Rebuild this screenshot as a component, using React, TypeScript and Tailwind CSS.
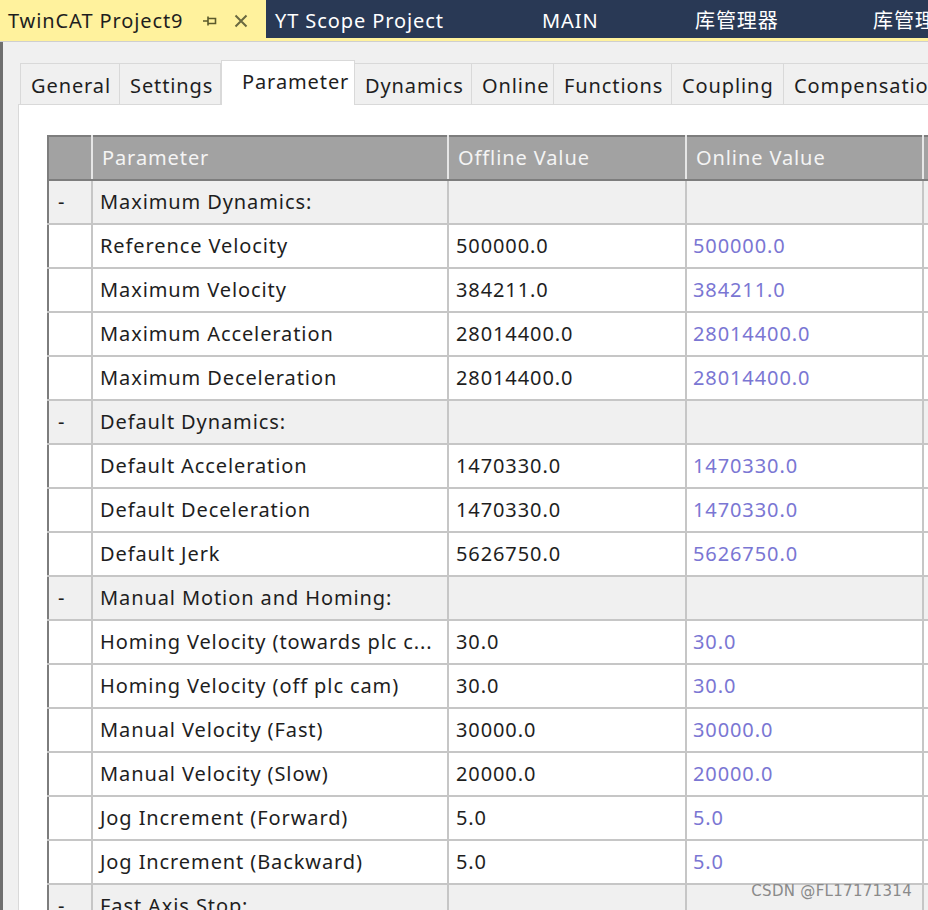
import React from "react";

type Row = {
  group?: boolean;
  name: string;
  offline?: string;
  online?: string;
};

const ROWS: Row[] = [
  { group: true, name: "Maximum Dynamics:" },
  { name: "Reference Velocity", offline: "500000.0", online: "500000.0" },
  { name: "Maximum Velocity", offline: "384211.0", online: "384211.0" },
  { name: "Maximum Acceleration", offline: "28014400.0", online: "28014400.0" },
  { name: "Maximum Deceleration", offline: "28014400.0", online: "28014400.0" },
  { group: true, name: "Default Dynamics:" },
  { name: "Default Acceleration", offline: "1470330.0", online: "1470330.0" },
  { name: "Default Deceleration", offline: "1470330.0", online: "1470330.0" },
  { name: "Default Jerk", offline: "5626750.0", online: "5626750.0" },
  { group: true, name: "Manual Motion and Homing:" },
  { name: "Homing Velocity (towards plc c...", offline: "30.0", online: "30.0" },
  { name: "Homing Velocity (off plc cam)", offline: "30.0", online: "30.0" },
  { name: "Manual Velocity (Fast)", offline: "30000.0", online: "30000.0" },
  { name: "Manual Velocity (Slow)", offline: "20000.0", online: "20000.0" },
  { name: "Jog Increment (Forward)", offline: "5.0", online: "5.0" },
  { name: "Jog Increment (Backward)", offline: "5.0", online: "5.0" },
  { group: true, name: "Fast Axis Stop:" },
];

const TABS = [
  { label: "General", w: "w-[100px]" },
  { label: "Settings", w: "w-[101px]" },
  { label: "Parameter", w: "w-[134px]", active: true },
  { label: "Dynamics", w: "w-[117px]" },
  { label: "Online", w: "w-[82px]" },
  { label: "Functions", w: "w-[118px]" },
  { label: "Coupling", w: "w-[112px]" },
  { label: "Compensation", w: "w-[170px]" },
];

const FONT = {
  fontFamily: '"Noto Sans", "Noto Sans CJK SC", sans-serif',
};

function PinIcon() {
  return (
    <svg width="14" height="12" viewBox="0 0 14 12" className="shrink-0">
      <path d="M0 6 H5 M5 1.5 V10.5 M5 3.5 H12.5 V8.5 H5" fill="none" stroke="#5b5a2c" strokeWidth="1.6" />
    </svg>
  );
}

function CloseIcon() {
  return (
    <svg width="14" height="14" viewBox="0 0 14 14" className="shrink-0">
      <path d="M1.5 1.5 L12.5 12.5 M12.5 1.5 L1.5 12.5" stroke="#6a6940" strokeWidth="2" />
    </svg>
  );
}

export default function App() {
  return (
    <div
      className="relative w-[928px] h-[910px] overflow-hidden bg-[#f0f0f0] text-[20px] tracking-[0.9px] text-[#1e1e1e]"
      style={FONT}
    >
      {/* document tab strip */}
      <div className="flex h-[38px] bg-[#293955] whitespace-nowrap">
        <div className="flex w-[266px] shrink-0 items-center bg-[#fff29d] pl-[8px] pt-[3px] text-[#1e1e1e]">
          <span className="leading-none">TwinCAT Project9</span>
          <span className="ml-[20px] flex items-center">
            <PinIcon />
          </span>
          <span className="ml-[17px] flex items-center">
            <CloseIcon />
          </span>
        </div>
        <div className="flex items-center pt-[3px] text-white">
          <span className="ml-[9px] w-[267px]">YT Scope Project</span>
          <span className="w-[153px]">MAIN</span>
          <span className="w-[178px]">库管理器</span>
          <span>库管理器</span>
        </div>
      </div>
      <div className="h-[3px] bg-[#fff29d]" />
      <div className="h-[1px] bg-[#cfcfcf]" />

      {/* window body */}
      <div className="flex h-full border-l-[3px] border-[#6f6f6f]">
        <div className="flex flex-1 flex-col pl-[15px] pt-[18px]">
          {/* property tabs */}
          <div className="flex h-[44px] items-end pl-[2px] whitespace-nowrap">
            {TABS.map((t) =>
              t.active ? (
                <div
                  key={t.label}
                  className={`${t.w} relative z-10 -mb-[1px] flex h-[45px] shrink-0 items-start border border-b-0 border-[#d9d9d9] bg-white pl-[20px] pt-[6px]`}
                >
                  {t.label}
                </div>
              ) : (
                <div
                  key={t.label}
                  className={`${t.w} flex h-[41px] shrink-0 items-center border border-l-0 border-b-0 border-[#d9d9d9] bg-[#f0f0f0] pl-[10px] pt-[3px] first:border-l`}
                >
                  {t.label}
                </div>
              ),
            )}
          </div>

          {/* content */}
          <div className="flex-1 border-l border-t border-[#d9d9d9] bg-white pl-[28px] pt-[30px]">
            <table className="table-fixed border-collapse whitespace-nowrap" style={{ width: 975 }}>
              <colgroup>
                <col style={{ width: 44 }} />
                <col style={{ width: 356 }} />
                <col style={{ width: 238 }} />
                <col style={{ width: 237 }} />
                <col style={{ width: 100 }} />
              </colgroup>
              <thead>
                <tr className="h-[44px] bg-[#a2a2a2] text-left text-[#f4f4f4]">
                  <th className="border-2 border-r-[#e6e6e6] border-[#7d7d7d] font-normal" />
                  <th className="border-y-2 border-x-2 border-y-[#7d7d7d] border-x-[#e6e6e6] pl-[9px] font-normal">Parameter</th>
                  <th className="border-y-2 border-x-2 border-y-[#7d7d7d] border-x-[#e6e6e6] pl-[9px] font-normal">Offline Value</th>
                  <th className="border-y-2 border-x-2 border-y-[#7d7d7d] border-x-[#e6e6e6] pl-[9px] font-normal">Online Value</th>
                  <th className="border-y-2 border-x-2 border-y-[#7d7d7d] border-x-[#e6e6e6] font-normal" />
                </tr>
              </thead>
              <tbody>
                {ROWS.map((r) => (
                  <tr key={r.name} className={`h-[44px] ${r.group ? "bg-[#f0f0f0]" : "bg-white"}`}>
                    <td className="border-2 border-l-[#7d7d7d] border-[#c6c6c6] pl-[9px]">{r.group ? "-" : ""}</td>
                    <td className="overflow-hidden border-2 border-[#c6c6c6] pl-[7px]">{r.name}</td>
                    <td className="border-2 border-[#c6c6c6] pl-[7px]">{r.offline ?? ""}</td>
                    <td className="border-2 border-[#c6c6c6] pl-[6px] text-[#7a76d3]">{r.online ?? ""}</td>
                    <td className="border-2 border-[#c6c6c6]" />
                  </tr>
                ))}
              </tbody>
            </table>
          </div>
        </div>
      </div>

      {/* image watermark */}
      <div
        className="absolute right-[16px] bottom-[8px] text-[15px] tracking-[0.3px] text-[#8a8a8a]"
        style={{ fontFamily: '"DejaVu Sans", sans-serif' }}
      >
        CSDN @FL17171314
      </div>
    </div>
  );
}
